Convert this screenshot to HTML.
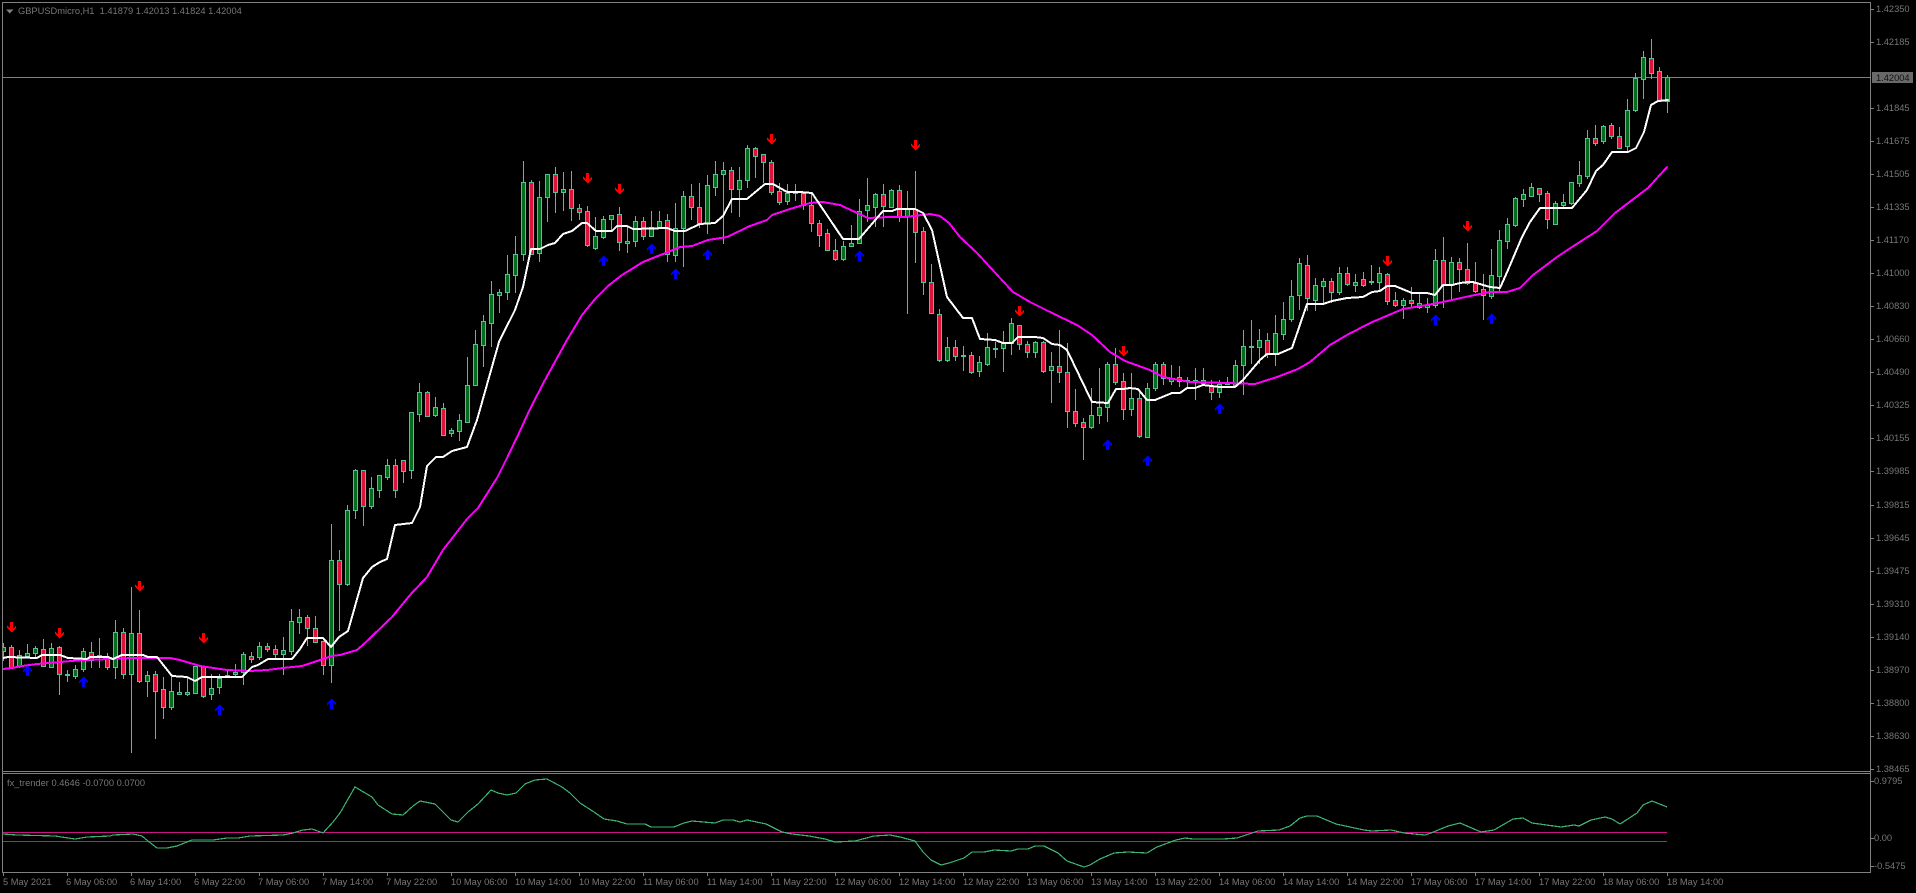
<!DOCTYPE html>
<html><head><meta charset="utf-8"><title>GBPUSDmicro,H1</title>
<style>
html,body{margin:0;padding:0;background:#000;width:1916px;height:893px;overflow:hidden}
svg{display:block;position:absolute;left:0;top:0}
text{font-family:"Liberation Sans",sans-serif;font-size:9.3px;fill:#777}
</style></head><body>
<svg width="1916" height="893" viewBox="0 0 1916 893" xmlns="http://www.w3.org/2000/svg">
<rect width="1916" height="893" fill="#000"/>
<path d="M2 77.5H1870" stroke="#808080" stroke-width="1" shape-rendering="crispEdges"/>
<g transform="translate(.5,0)" shape-rendering="crispEdges">
<path fill="none" stroke="#58be96" stroke-width="1" d="M3 643V661M11 645V668M19 650V668M27 644V658M35 646V658M43 639V667M51 643V667M59 646V695M67 670V682M75 665V679M83 648V672M91 642V668M99 638V668M107 653V670M115 620V679M123 628V679M131 587V753M139 610V683M147 671V697M155 671V739M163 677V719M171 677V710M179 682V694M187 678V696M195 666V694M203 666V698M211 674V700M219 674V694M227 670V678M235 664V678M243 652V685M251 652V663M259 642V660M267 643V652M275 645V659M283 637V675M291 609V655M299 609V634M307 615V646M315 616V642M323 641V675M331 524V683M339 550V631M347 505V586M355 469V519M363 470V526M371 477V509M379 475V498M387 459V480M395 459V498M403 460V483M411 412V479M419 383V422M427 391V416M435 397V417M443 403V436M451 428V437M459 414V441M467 357V422M475 330V386M483 315V367M491 281V347M499 289V313M507 255V300M515 236V293M523 161V261M531 180V255M539 181V262M547 174V222M555 167V213M563 172V211M571 171V221M579 204V220M587 206V247M595 217V250M603 216V239M611 215V230M619 207V251M627 226V253M635 216V247M643 217V240M651 211V236M659 211V228M667 214V262M675 203V262M683 191V267M691 184V220M699 183V228M707 175V234M715 161V196M723 162V244M731 167V213M739 167V217M747 145V188M755 147V178M763 154V183M771 160V195M779 183V205M787 184V205M795 184V201M803 193V210M811 193V232M819 220V247M827 229V250M835 239V261M843 241V261M851 225V243M859 199V243M867 178V222M875 193V227M883 184V227M891 189V208M899 185V222M907 191V314M915 171V263M923 227V295M931 264V314M939 309V362M947 337V362M955 340V361M963 346V371M971 352V374M979 356V377M987 333V366M995 342V358M1003 331V372M1011 318V355M1019 325V350M1027 341V358M1035 341V358M1043 341V373M1051 352V403M1059 330V383M1067 343V428M1075 389V427M1083 418V460M1091 388V429M1099 368V424M1107 362V422M1115 348V385M1123 373V420M1131 373V416M1139 390V438M1147 383V438M1155 362V391M1163 362V385M1171 365V385M1179 366V387M1187 377V387M1195 368V400M1203 368V385M1211 380V400M1219 380V398M1227 377V385M1235 360V386M1243 330V395M1251 320V364M1259 329V364M1267 333V358M1275 315V366M1283 302V340M1291 280V322M1299 258V310M1307 255V311M1315 278V311M1323 278V303M1331 278V303M1339 267V295M1347 267V286M1355 274V292M1363 272V287M1371 265V285M1379 267V292M1387 273V305M1395 292V307M1403 298V319M1411 287V308M1419 293V309M1427 298V313M1435 249V308M1443 237V308M1451 257V299M1459 258V292M1467 243V285M1475 262V293M1483 274V320M1491 249V299M1499 230V293M1507 218V249M1515 197V227M1523 189V207M1531 183V197M1539 188V202M1547 191V229M1555 201V224M1563 194V208M1571 182V205M1579 161V187M1587 130V179M1595 125V146M1603 125V144M1611 123V139M1619 127V149M1627 99V152M1635 73V112M1643 51V99M1651 39V79M1659 67V102M1667 75V113"/>
</g>
<g transform="translate(.5,.5)" shape-rendering="crispEdges" stroke="#58be96" stroke-width="1">
<path fill="#006e1c" d="M1 647h4V651h-4zM17 655h4V666h-4zM25 653h4V656h-4zM33 648h4V653h-4zM49 648h4V667h-4zM65 674h4V675h-4zM73 669h4V676h-4zM81 651h4V669h-4zM97 655h4V657h-4zM113 632h4V667h-4zM129 633h4V674h-4zM145 675h4V681h-4zM169 691h4V707h-4zM177 692h4V694h-4zM185 692h4V694h-4zM193 666h4V693h-4zM209 688h4V694h-4zM217 678h4V687h-4zM225 675h4V676h-4zM233 672h4V674h-4zM241 654h4V672h-4zM257 646h4V657h-4zM281 650h4V654h-4zM289 621h4V651h-4zM297 617h4V622h-4zM329 560h4V665h-4zM345 510h4V584h-4zM353 470h4V510h-4zM369 488h4V506h-4zM377 475h4V490h-4zM385 465h4V477h-4zM409 412h4V470h-4zM417 392h4V414h-4zM433 407h4V415h-4zM449 430h4V433h-4zM457 420h4V431h-4zM465 385h4V422h-4zM473 344h4V385h-4zM481 321h4V345h-4zM489 294h4V323h-4zM497 292h4V295h-4zM505 274h4V292h-4zM513 254h4V275h-4zM521 182h4V254h-4zM537 197h4V253h-4zM545 174h4V197h-4zM561 189h4V192h-4zM593 236h4V248h-4zM601 219h4V237h-4zM609 215h4V219h-4zM625 241h4V243h-4zM633 221h4V241h-4zM649 227h4V236h-4zM657 221h4V227h-4zM673 228h4V255h-4zM681 196h4V228h-4zM705 185h4V223h-4zM713 174h4V187h-4zM721 170h4V174h-4zM737 180h4V189h-4zM745 148h4V180h-4zM785 193h4V201h-4zM793 192h4V193h-4zM841 246h4V259h-4zM849 243h4V246h-4zM857 211h4V243h-4zM865 205h4V210h-4zM873 194h4V207h-4zM889 190h4V207h-4zM905 208h4V216h-4zM945 347h4V360h-4zM961 355h4V356h-4zM977 362h4V371h-4zM985 347h4V364h-4zM993 348h4V349h-4zM1001 343h4V348h-4zM1009 323h4V343h-4zM1033 342h4V352h-4zM1049 366h4V370h-4zM1089 415h4V427h-4zM1097 407h4V415h-4zM1105 364h4V407h-4zM1129 398h4V409h-4zM1145 388h4V437h-4zM1153 364h4V388h-4zM1169 378h4V381h-4zM1185 380h4V381h-4zM1193 380h4V381h-4zM1217 384h4V392h-4zM1225 383h4V384h-4zM1233 365h4V385h-4zM1241 346h4V365h-4zM1249 346h4V347h-4zM1257 340h4V347h-4zM1273 333h4V353h-4zM1281 319h4V334h-4zM1289 296h4V319h-4zM1297 263h4V295h-4zM1313 285h4V300h-4zM1321 281h4V286h-4zM1337 273h4V292h-4zM1353 282h4V285h-4zM1369 281h4V282h-4zM1377 273h4V282h-4zM1401 300h4V305h-4zM1417 303h4V307h-4zM1425 305h4V307h-4zM1433 260h4V305h-4zM1449 262h4V285h-4zM1489 275h4V296h-4zM1497 240h4V276h-4zM1505 224h4V241h-4zM1513 198h4V225h-4zM1521 194h4V199h-4zM1529 187h4V196h-4zM1553 203h4V224h-4zM1561 202h4V205h-4zM1569 182h4V203h-4zM1577 175h4V183h-4zM1585 138h4V176h-4zM1601 126h4V141h-4zM1625 110h4V146h-4zM1633 78h4V110h-4zM1641 57h4V79h-4zM1665 77h4V101h-4z"/>
<path fill="#dc143c" d="M9 647h4V667h-4zM41 649h4V666h-4zM57 647h4V674h-4zM89 652h4V660h-4zM105 659h4V667h-4zM121 632h4V674h-4zM137 633h4V681h-4zM153 674h4V691h-4zM161 689h4V707h-4zM201 666h4V696h-4zM249 656h4V659h-4zM265 646h4V649h-4zM273 649h4V654h-4zM305 617h4V628h-4zM313 628h4V642h-4zM321 641h4V665h-4zM337 560h4V584h-4zM361 470h4V506h-4zM393 465h4V490h-4zM401 460h4V471h-4zM425 392h4V416h-4zM441 408h4V435h-4zM529 182h4V254h-4zM553 174h4V192h-4zM569 189h4V208h-4zM577 208h4V212h-4zM585 211h4V245h-4zM617 214h4V242h-4zM641 221h4V236h-4zM665 220h4V254h-4zM689 196h4V207h-4zM697 207h4V223h-4zM729 170h4V189h-4zM753 148h4V156h-4zM761 154h4V162h-4zM769 162h4V192h-4zM777 191h4V202h-4zM801 193h4V205h-4zM809 205h4V223h-4zM817 223h4V235h-4zM825 233h4V250h-4zM833 250h4V259h-4zM881 194h4V206h-4zM897 190h4V216h-4zM913 209h4V232h-4zM921 231h4V282h-4zM929 282h4V313h-4zM937 314h4V360h-4zM953 347h4V356h-4zM969 355h4V372h-4zM1017 325h4V344h-4zM1025 344h4V352h-4zM1041 342h4V371h-4zM1057 366h4V372h-4zM1065 372h4V411h-4zM1073 411h4V423h-4zM1081 422h4V427h-4zM1113 364h4V382h-4zM1121 381h4V409h-4zM1137 398h4V436h-4zM1161 364h4V378h-4zM1177 377h4V381h-4zM1201 380h4V383h-4zM1209 386h4V392h-4zM1265 340h4V353h-4zM1305 265h4V298h-4zM1329 281h4V292h-4zM1345 273h4V284h-4zM1361 279h4V285h-4zM1385 274h4V301h-4zM1393 300h4V305h-4zM1409 300h4V303h-4zM1441 260h4V285h-4zM1457 262h4V269h-4zM1465 269h4V283h-4zM1473 283h4V291h-4zM1481 289h4V295h-4zM1537 188h4V194h-4zM1545 193h4V219h-4zM1593 138h4V143h-4zM1609 125h4V136h-4zM1617 136h4V148h-4zM1649 58h4V73h-4zM1657 71h4V101h-4z"/>
</g>
<g fill="none" stroke-width="2" stroke-linejoin="round" stroke-linecap="round" shape-rendering="crispEdges">
<polyline stroke="#ff00ff" points="3,669 12,668 22,666 37,664 60,662 83,660 110,659 133,658 170,658 180,660 200,666 227,670 250,671 267,670 283,668 302,666 317,661 332,656 340,655 357,650 365,643 392,617 410,595 427,577 443,550 467,519 478,508 497,478 508,456 519,433 530,409 545,380 567,340 582,315 595,299 608,286 622,275 643,262 668,252 680,247 692,246 708,240 727,237 750,226 767,220 772,215 790,209 810,203 823,202 840,205 868,218 890,217 905,217 930,214 940,216 949,223 960,237 977,253 1000,278 1013,292 1030,302 1050,312 1077,325 1092,335 1110,352 1125,361 1150,370 1163,377 1190,382 1227,383 1255,384 1277,377 1298,369 1310,362 1330,345 1347,335 1370,323 1403,309 1427,305 1443,302 1470,296 1490,292 1507,292 1520,288 1533,275 1557,257 1572,247 1597,231 1615,213 1648,188 1667,167"/>
<polyline stroke="#ffffff" points="3,658 8,657 37,658 42,655 60,655 68,658 87,659 90,657 108,657 113,659 122,655 143,655 148,657 157,657 172,676 187,677 195,681 202,677 242,677 252,667 258,665 268,659 292,659 300,649 307,638 323,638 331,647 339,637 348,631 363,578 372,567 380,562 387,559 395,525 412,523 420,507 427,466 436,457 443,457 452,451 467,447 477,420 499,342 515,310 523,287 531,249 540,249 548,245 555,243 563,234 572,231 582,223 587,223 596,231 612,231 617,226 627,226 633,229 667,228 675,231 685,231 700,224 715,223 723,216 732,199 747,199 765,184 773,184 787,192 800,192 812,193 843,239 859,239 883,211 892,211 897,209 915,209 923,213 932,230 947,297 963,318 972,318 980,339 995,340 1003,343 1012,343 1018,337 1035,337 1043,338 1052,344 1060,345 1067,350 1092,402 1108,403 1116,389 1123,389 1130,388 1138,389 1147,400 1155,400 1172,393 1180,393 1187,388 1195,388 1203,385 1220,387 1235,387 1243,380 1260,360 1267,354 1278,354 1292,348 1307,304 1323,304 1332,301 1347,298 1363,297 1372,292 1380,291 1387,286 1395,286 1412,293 1427,293 1435,295 1443,285 1452,285 1460,283 1468,282 1473,282 1490,287 1500,288 1508,270 1522,237 1530,222 1540,208 1563,208 1572,208 1587,190 1596,171 1603,165 1612,152 1628,152 1636,148 1644,132 1651,105 1658,101 1668,100"/>
</g>
<defs><path id="u" d="M0-5.5L4.5-1V1.5L1.5-1.5V5H-1.5V-1.5L-4.5 1.5V-1z"/><path id="d" d="M0 5.5L4.5 1V-1.5L1.5 1.5V-5H-1.5V1.5L-4.5-1.5V1z"/></defs>
<g fill="#ff0000" shape-rendering="crispEdges">
<use href="#d" x="11.5" y="627"/><use href="#d" x="59.5" y="633"/><use href="#d" x="139.5" y="586"/><use href="#d" x="203.5" y="638"/><use href="#d" x="587.5" y="178"/><use href="#d" x="619.5" y="189"/><use href="#d" x="771.5" y="139"/><use href="#d" x="915.5" y="145"/><use href="#d" x="1019.5" y="311"/><use href="#d" x="1123.5" y="351"/><use href="#d" x="1387.5" y="261"/><use href="#d" x="1467.5" y="226"/>
</g>
<g fill="#0000ff" shape-rendering="crispEdges">
<use href="#u" x="27.5" y="671"/><use href="#u" x="83.5" y="682"/><use href="#u" x="219.5" y="710"/><use href="#u" x="331.5" y="704"/><use href="#u" x="603.5" y="261"/><use href="#u" x="651.5" y="249"/><use href="#u" x="675.5" y="274"/><use href="#u" x="707.5" y="255"/><use href="#u" x="859.5" y="256"/><use href="#u" x="1107.5" y="445"/><use href="#u" x="1147.5" y="461"/><use href="#u" x="1219.5" y="409"/><use href="#u" x="1435.5" y="320"/><use href="#u" x="1491.5" y="319"/>
</g>
<path d="M3 832.5H1667M3 841.5H1667" stroke="#c71585" stroke-width="1" shape-rendering="crispEdges"/>
<polyline fill="none" stroke="#3cb371" stroke-width="1.2" shape-rendering="crispEdges" points="3,834 17,835 55,836 75,839 87,837 110,836 113,835 133,834 142,836 148,841 157,848 167,848 177,846 192,840 207,840 213,840 227,838 238,838 250,836 283,835 293,833 303,830 312,829 323,833 333,822 340,813 355,787 372,797 378,805 392,814 403,815 413,806 420,801 435,804 451,820 458,822 468,812 478,804 491,790 498,793 507,795 516,793 525,784 535,780 547,779 562,787 570,793 580,803 594,812 604,819 617,821 627,824 645,824 651,827 664,827 674,827 684,823 692,821 715,823 723,820 733,820 740,822 747,820 766,824 782,832 792,834 809,836 825,839 835,842 855,841 874,836 890,835 900,837 915,841 923,852 931,860 941,865 949,863 964,858 972,852 984,852 994,850 1011,851 1018,849 1028,849 1035,846 1044,846 1058,853 1067,861 1084,867 1090,865 1100,859 1114,853 1128,852 1147,853 1157,847 1176,840 1185,838 1193,839 1223,839 1237,838 1258,831 1279,830 1290,826 1300,818 1307,816 1317,816 1336,824 1364,830 1372,831 1391,830 1404,833 1425,835 1431,833 1448,826 1460,823 1481,832 1494,830 1513,819 1523,818 1532,823 1561,827 1574,825 1579,826 1591,820 1605,817 1612,819 1620,824 1637,813 1643,805 1652,801 1667,807"/>
<rect x="0" y="0" width="2" height="893" fill="#000"/>
<g stroke="#808080" stroke-width="1" fill="none" shape-rendering="crispEdges">
<path d="M2.5 2.5H1870.5V872.5H2.5zM2.5 771.5H1870.5M2.5 773.5H1870.5"/>
<path d="M1870 9.5h4M1870 42.5h4M1870 108.5h4M1870 141.5h4M1870 174.5h4M1870 207.5h4M1870 240.5h4M1870 273.5h4M1870 306.5h4M1870 339.5h4M1870 372.5h4M1870 405.5h4M1870 438.5h4M1870 471.5h4M1870 505.5h4M1870 538.5h4M1870 571.5h4M1870 604.5h4M1870 637.5h4M1870 670.5h4M1870 703.5h4M1870 736.5h4M1870 769.5h4M1870 781.5h4M1870 838.5h4M1870 866.5h4"/>
<path d="M3.5 872v4M67.5 872v4M131.5 872v4M195.5 872v4M259.5 872v4M323.5 872v4M387.5 872v4M451.5 872v4M515.5 872v4M579.5 872v4M643.5 872v4M707.5 872v4M771.5 872v4M835.5 872v4M899.5 872v4M963.5 872v4M1027.5 872v4M1091.5 872v4M1155.5 872v4M1219.5 872v4M1283.5 872v4M1347.5 872v4M1411.5 872v4M1475.5 872v4M1539.5 872v4M1603.5 872v4M1667.5 872v4"/>
</g>
<path d="M6 9.5H13.5L9.7 13.5z" fill="#808080"/>
<text x="18" y="14" xml:space="preserve">GBPUSDmicro,H1  1.41879 1.42013 1.41824 1.42004</text>
<text x="7" y="786">fx_trender 0.4646 -0.0700 0.0700</text>
<rect x="1872" y="72" width="41" height="11" fill="#696969"/>
<g>
<text x="1876" y="12">1.42350</text><text x="1876" y="45">1.42185</text><text x="1876" y="81" style="fill:#111">1.42004</text><text x="1876" y="111">1.41845</text><text x="1876" y="144">1.41675</text><text x="1876" y="177">1.41505</text><text x="1876" y="210">1.41335</text><text x="1876" y="243">1.41170</text><text x="1876" y="276">1.41000</text><text x="1876" y="309">1.40830</text><text x="1876" y="342">1.40660</text><text x="1876" y="375">1.40490</text><text x="1876" y="408">1.40325</text><text x="1876" y="441">1.40155</text><text x="1876" y="474">1.39985</text><text x="1876" y="508">1.39815</text><text x="1876" y="541">1.39645</text><text x="1876" y="574">1.39475</text><text x="1876" y="607">1.39310</text><text x="1876" y="640">1.39140</text><text x="1876" y="673">1.38970</text><text x="1876" y="706">1.38800</text><text x="1876" y="739">1.38630</text><text x="1876" y="772">1.38465</text>
<text x="1874" y="784">0.9795</text><text x="1874" y="841">0.00</text><text x="1874" y="869">-0.5475</text>
</g>
<g>
<text x="3" y="885">5 May 2021</text><text x="66" y="885">6 May 06:00</text><text x="130" y="885">6 May 14:00</text><text x="194" y="885">6 May 22:00</text><text x="258" y="885">7 May 06:00</text><text x="322" y="885">7 May 14:00</text><text x="386" y="885">7 May 22:00</text><text x="451" y="885">10 May 06:00</text><text x="515" y="885">10 May 14:00</text><text x="579" y="885">10 May 22:00</text><text x="643" y="885">11 May 06:00</text><text x="707" y="885">11 May 14:00</text><text x="771" y="885">11 May 22:00</text><text x="835" y="885">12 May 06:00</text><text x="899" y="885">12 May 14:00</text><text x="963" y="885">12 May 22:00</text><text x="1027" y="885">13 May 06:00</text><text x="1091" y="885">13 May 14:00</text><text x="1155" y="885">13 May 22:00</text><text x="1219" y="885">14 May 06:00</text><text x="1283" y="885">14 May 14:00</text><text x="1347" y="885">14 May 22:00</text><text x="1411" y="885">17 May 06:00</text><text x="1475" y="885">17 May 14:00</text><text x="1539" y="885">17 May 22:00</text><text x="1603" y="885">18 May 06:00</text><text x="1667" y="885">18 May 14:00</text>
</g>
</svg>
</body></html>
